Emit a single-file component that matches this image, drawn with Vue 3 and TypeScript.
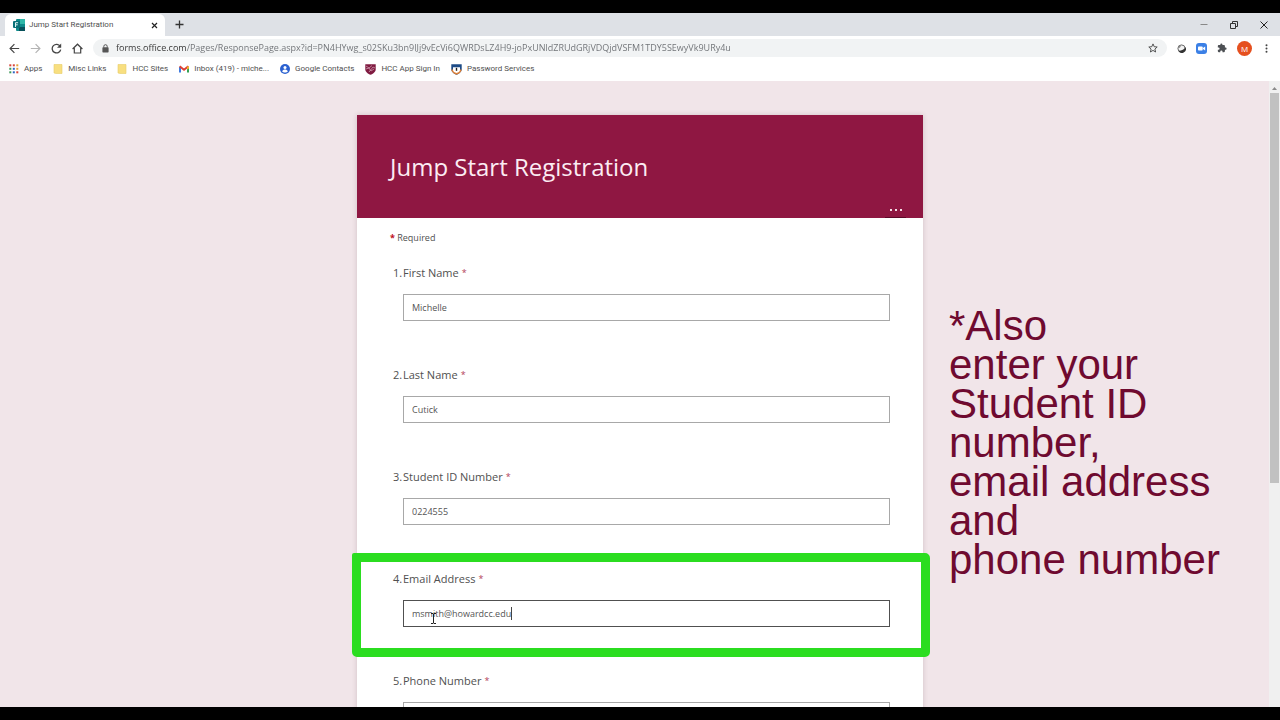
<script setup lang="ts">
import { ref } from 'vue'

interface Question {
  id: string
  label: string
  value: string
  active?: boolean
}

const url = ref('forms.office.com/Pages/ResponsePage.aspx?id=PN4HYwg_s02SKu3bn9lJj9vEcVi6QWRDsLZ4H9-joPxUNldZRUdGRjVDQjdVSFM1TDY5SEwyVk9URy4u')

const questions = ref<Question[]>([
  { id: 'first-name', label: 'First Name', value: 'Michelle' },
  { id: 'last-name', label: 'Last Name', value: 'Cutick' },
  { id: 'student-id', label: 'Student ID Number', value: '0224555' },
  { id: 'email', label: 'Email Address', value: 'msmith@howardcc.edu', active: true },
  { id: 'phone', label: 'Phone Number', value: '' },
])

const noteLines = ['*Also', 'enter your', 'Student ID', 'number,', 'email address', 'and', 'phone number']

const appDots = ['#d8453a', '#d8453a', '#e2a33a', '#3f9a5a', '#2f66c4', '#e2a33a', '#3f9a5a', '#2f66c4', '#d8453a']
</script>

<template>
  <div class="screen">
    <header class="browser">
      <div class="tabstrip">
        <div class="tab">
          <svg class="forms-icon" viewBox="0 0 12 12" aria-hidden="true">
            <rect x="3" y="0" width="9" height="12" rx="1" fill="#0e8a8a" />
            <rect x="7" y="0" width="5" height="5" fill="#2fb7a8" />
            <rect x="6" y="8" width="6" height="4" fill="#07505a" />
            <rect x="0" y="2" width="7" height="7" rx="1" fill="#0a7078" />
            <path d="M2.5 8V3.7h2.6M2.5 5.8h2.2" stroke="#d9f3f1" fill="none" />
          </svg>
          <span class="tab-title">Jump Start Registration</span>
          <button class="icon-btn" aria-label="Close tab">
            <svg width="7" height="7" viewBox="0 0 7 7"><path d="M1 1l5 5M6 1L1 6" stroke="#222" stroke-width="1.2" /></svg>
          </button>
        </div>
        <button class="icon-btn new-tab" aria-label="New tab">
          <svg width="9" height="9" viewBox="0 0 9 9"><path d="M4.5 .5v8M.5 4.5h8" stroke="#333" stroke-width="1.3" /></svg>
        </button>
        <div class="window-controls">
          <button class="icon-btn" aria-label="Minimize">
            <svg width="8" height="8" viewBox="0 0 8 8"><path d="M.5 3.5h7" stroke="#888" /></svg>
          </button>
          <button class="icon-btn" aria-label="Restore">
            <svg width="8" height="8" viewBox="0 0 8 8"><path d="M.5 2.500h5v5h-5zM2.500 2.500v-2h5v5h-2" fill="none" stroke="#333" /></svg>
          </button>
          <button class="icon-btn" aria-label="Close window">
            <svg width="8" height="8" viewBox="0 0 8 8"><path d="M.5 .5l7 7M7.500 .5l-7 7" stroke="#222" /></svg>
          </button>
        </div>
      </div>

      <nav class="toolbar">
        <button class="icon-btn" aria-label="Back">
          <svg width="11" height="11" viewBox="0 0 11 11"><path d="M10.200 5.500H1.200M5.400 1.200L1.100 5.500l4.300 4.300" fill="none" stroke="#454545" stroke-width="1.200" /></svg>
        </button>
        <button class="icon-btn" aria-label="Forward">
          <svg width="11" height="11" viewBox="0 0 11 11"><path d="M.8 5.500h9M5.600 1.200l4.300 4.300-4.300 4.300" fill="none" stroke="#b4b4b4" stroke-width="1.200" /></svg>
        </button>
        <button class="icon-btn" aria-label="Reload">
          <svg width="11" height="11" viewBox="0 0 11 11"><path d="M9.200 3.400A4.300 4.300 0 1 0 9.700 6.600" fill="none" stroke="#454545" stroke-width="1.300" /><path d="M10.200 .6v4.200H6z" fill="#454545" /></svg>
        </button>
        <button class="icon-btn" aria-label="Home">
          <svg width="11" height="11" viewBox="0 0 11 11"><path d="M.6 6L5.500 1.200 10.400 6M2.300 5v5h6.400V5" fill="none" stroke="#454545" stroke-width="1.200" /></svg>
        </button>
        <div class="omnibox">
          <svg width="7" height="9" viewBox="0 0 7 9" aria-hidden="true"><rect x=".4" y="3.200" width="6.200" height="5.300" rx=".7" fill="#555" /><path d="M1.800 3.600V2.400a1.700 1.700 0 0 1 3.400 0v1.200" fill="none" stroke="#555" /></svg>
          <input v-model="url" class="url" aria-label="Address" spellcheck="false" />
          <button class="icon-btn" aria-label="Bookmark this page">
            <svg width="10" height="10" viewBox="0 0 10 10"><path d="M5 .9l1.200 2.800 3 .3-2.300 2 .7 3L5 7.400 2.400 9l.7-3L.8 4l3-.3z" fill="none" stroke="#444" stroke-width=".9" /></svg>
          </button>
        </div>
        <button class="icon-btn" aria-label="Recorder extension">
          <svg width="9" height="9" viewBox="0 0 9 9"><circle cx="4.500" cy="4.500" r="3.600" fill="#f3f3f3" stroke="#6a6a6a" /><path d="M1.300 6.700A4 4 0 0 0 8.400 3C7.300 5.800 4.500 6.800 1.300 6.700z" fill="#333" /><path d="M1 4.500A3.500 3.500 0 0 1 4.500 1L3 3.500z" fill="#888" /></svg>
        </button>
        <button class="icon-btn" aria-label="Zoom extension">
          <svg width="11" height="11" viewBox="0 0 11 11"><rect width="11" height="11" rx="3" fill="#3b80e6" /><rect x="2" y="3.400" width="4.700" height="4.200" rx=".8" fill="#fff" /><path d="M7 5l2.200-1.500v4L7 6z" fill="#fff" /></svg>
        </button>
        <button class="icon-btn" aria-label="Extensions">
          <svg width="10" height="10" viewBox="0 0 24 24"><path d="M20.500 11H19V7c0-1.100-.9-2-2-2h-4V3.500a2.500 2.500 0 0 0-5 0V5H4c-1.100 0-2 .9-2 2v3.800h1.500a2.700 2.700 0 0 1 0 5.400H2V20c0 1.100.9 2 2 2h3.800v-1.500a2.700 2.700 0 0 1 5.400 0V22H17c1.100 0 2-.9 2-2v-4h1.500a2.500 2.500 0 0 0 0-5z" fill="#4d5054" /></svg>
        </button>
        <button class="avatar" aria-label="Profile">M</button>
        <button class="icon-btn" aria-label="Menu">
          <svg width="3" height="9" viewBox="0 0 3 9"><g fill="#444"><circle cx="1.500" cy="1.200" r="1" /><circle cx="1.500" cy="4.500" r="1" /><circle cx="1.500" cy="7.800" r="1" /></g></svg>
        </button>
      </nav>

      <nav class="bookmarks" aria-label="Bookmarks">
        <a href="#">
          <svg width="10" height="10" viewBox="0 0 10 10"><rect v-for="(c, i) in appDots" :key="i" :x="(i % 3) * 3.5 + 0.3" :y="Math.floor(i / 3) * 3.5 + 0.3" width="2" height="2" :fill="c" /></svg>
          Apps
        </a>
        <a href="#"><svg width="10" height="10" viewBox="0 0 10 10"><path d="M1 .5h8V9.500H3L1 9z" fill="#f8df80" stroke="#e8cd68" stroke-width=".6" /></svg>Misc Links</a>
        <a href="#"><svg width="10" height="10" viewBox="0 0 10 10"><path d="M1 .5h8V9.500H3L1 9z" fill="#f8df80" stroke="#e8cd68" stroke-width=".6" /></svg>HCC Sites</a>
        <a href="#">
          <svg width="10" height="10" viewBox="0 0 10 10"><path d="M1 8.500V3" stroke="#3f7be0" stroke-width="2" /><path d="M9 8.500V3" stroke="#35a255" stroke-width="2" /><path d="M.6 2.300L5 5.800l4.400-3.500" fill="none" stroke="#dc4034" stroke-width="2" /><path d="M8 2.500h2v2L8 5.500z" fill="#f2b52b" /></svg>
          Inbox (419) - miche...
        </a>
        <a href="#">
          <svg width="10" height="10" viewBox="0 0 10 10"><circle cx="5" cy="5" r="5" fill="#2b61d0" /><circle cx="5" cy="3.500" r="1.500" fill="#fff" /><path d="M2.200 7.500c.8-2.600 4.800-2.600 5.600 0-1.200 1.400-4.400 1.400-5.600 0z" fill="#fff" /></svg>
          Google Contacts
        </a>
        <a href="#">
          <svg width="11" height="11" viewBox="0 0 11 11"><path d="M.3.3h10.400v5.200c0 2.600-3 4.400-5.200 5.300C3.300 9.900.3 8.100.3 5.500z" fill="#7f1a40" /><path d="M1 2l3 2 3-2.500M1 5l3-1 2 3 3-2M4 8l4-5 2 1" fill="none" stroke="#d9aabb" stroke-width=".7" /></svg>
          HCC App Sign In
        </a>
        <a href="#">
          <svg width="11" height="11" viewBox="0 0 11 11"><path d="M.3.3h10.400v5.200c0 2.600-3 4.400-5.200 5.300C3.300 9.900.3 8.100.3 5.500z" fill="#1d4b86" /><path d="M.4 5.500h10.200c0 2.600-3 4.400-5.100 5.200C3.400 9.900.4 8.100.4 5.500z" fill="#e08238" /><path d="M2 3.200h7v2.800c0 1.500-2 2.500-3.500 3C4 8.500 2 7.500 2 6z" fill="#fff" /><path d="M5.500 3.800v3" stroke="#222" stroke-width="1.400" /></svg>
          Password Services
        </a>
      </nav>
    </header>

    <main class="page">
      <form class="card" @submit.prevent>
        <div class="banner">
          <h1>Jump Start Registration</h1>
          <button type="button" class="more" aria-label="More options">
            <svg width="12" height="2" viewBox="0 0 12 2"><path d="M0 0h2v2H0zM5 0h2v2H5zM10 0h2v2h-2z" fill="#f4dfe7" /></svg>
          </button>
        </div>
        <p class="required"><span class="required-star">*</span> Required</p>
        <div v-for="(q, i) in questions" :key="q.id" class="question" :class="{ active: q.active }">
          <label :for="q.id"><span class="number">{{ i + 1 }}.</span>{{ q.label }} <span class="star">*</span></label>
          <div class="field">
            <input :id="q.id" v-model="q.value" type="text" spellcheck="false" />
            <template v-if="q.active">
              <span class="caret"></span>
              <svg class="pointer" width="7" height="11" viewBox="0 0 7 11" aria-hidden="true"><path d="M1 .5h2l.5.5.5-.5h2M3.500 1v9M1 10.500h2l.5-.5.5.5h2" fill="none" stroke="#222" /></svg>
            </template>
          </div>
        </div>
      </form>
      <aside class="side">
        <p class="note"><span v-for="line in noteLines" :key="line">{{ line }}</span></p>
        <div class="scrollbar" aria-hidden="true">
          <svg width="5" height="3" viewBox="0 0 5 3"><path d="M0 3L2.500 0 5 3z" fill="#8a8a8a" /></svg>
          <div class="thumb"></div>
          <svg width="5" height="3" viewBox="0 0 5 3"><path d="M0 0h5L2.500 3z" fill="#444" /></svg>
        </div>
      </aside>
    </main>
  </div>
</template>

<style>
html,
body {
  background: #000;
}
</style>

<style scoped>
*,
*::after {
  box-sizing: border-box;
}

.screen {
  display: flex;
  flex-direction: column;
  height: 100vh;
  padding: 13px 0;
  overflow: hidden;
  background: #000;
  color: #505050;
  font-family: "Open Sans", "Noto Sans", sans-serif;
}

svg {
  display: block;
  flex: none;
}

button,
input {
  margin: 0;
  padding: 0;
  border: 0;
  background: none;
  font-family: inherit;
}

.icon-btn {
  display: flex;
  flex: none;
  align-items: center;
  justify-content: center;
}

.browser {
  flex: none;
  background: #fff;
}

.tabstrip {
  display: flex;
  align-items: center;
  height: 23px;
  padding-left: 5px;
  background: #dee1e6;
}

.tab {
  display: flex;
  align-items: center;
  align-self: flex-end;
  width: 160px;
  height: 22px;
  padding: 0 7px 0 8px;
  border-radius: 6px 6px 0 0;
  background: #fff;
}

.forms-icon {
  width: 12px;
  height: 12px;
}

.tab-title {
  flex: 1;
  margin-left: 4px;
  font-family: Roboto, "Open Sans", sans-serif;
  font-size: 8px;
  line-height: 12px;
  white-space: nowrap;
}

.new-tab {
  margin-left: 10px;
}

.window-controls {
  display: flex;
  gap: 22px;
  margin-left: auto;
  padding-right: 12px;
}

.toolbar {
  display: flex;
  align-items: center;
  gap: 10px;
  height: 24px;
  padding: 0 12px 0 9px;
}

.omnibox {
  display: flex;
  flex: 1;
  align-items: center;
  gap: 7px;
  height: 18px;
  padding: 0 9px;
  border-radius: 9px;
  background: #f1f3f4;
}

.url {
  flex: 1;
  min-width: 0;
  height: 18px;
  background: linear-gradient(to right, #333 71px, #6d7074 71px);
  background-clip: text;
  -webkit-background-clip: text;
  -webkit-text-fill-color: transparent;
  color: #6d7074;
  font-size: 9px;
  line-height: 18px;
}

.avatar {
  width: 15px;
  height: 15px;
  margin-right: 3px;
  border-radius: 50%;
  background: #e5501f;
  color: #fff;
  font-size: 8px;
  line-height: 15px;
}

.bookmarks {
  display: flex;
  align-items: center;
  gap: 11px;
  height: 21px;
  padding: 0 9px 3px;
}

.bookmarks a {
  display: flex;
  align-items: center;
  gap: 5px;
  color: #505050;
  font-family: Roboto, "Open Sans", sans-serif;
  font-size: 8px;
  line-height: 12px;
  text-decoration: none;
  white-space: nowrap;
}

.page {
  display: grid;
  flex: 1;
  grid-template-columns: 1fr minmax(0, 566px) 1fr;
  min-height: 0;
  overflow: hidden;
  background: #f1e5e9;
}

.card {
  grid-column: 2;
  align-self: start;
  margin-top: 34px;
  padding-bottom: 40px;
  background: #fff;
  box-shadow: 0 0 5px rgba(80, 40, 55, 0.2);
}

.banner {
  display: flex;
  align-items: center;
  justify-content: space-between;
  height: 103px;
  padding: 0 17px 0 33px;
  background: #8f1742;
}

h1 {
  margin: 0;
  color: #fcecf3;
  font-size: 24px;
  font-weight: 400;
  line-height: 34px;
}

.more {
  display: flex;
  align-items: center;
  align-self: flex-end;
  justify-content: center;
  width: 21px;
  height: 15px;
  border-bottom: 1px solid #5d0828;
}

.required {
  margin: 0;
  padding: 12px 33px 0;
  font-size: 9px;
  line-height: 16px;
}

.required-star {
  color: #c00d1e;
  font-weight: 700;
}

.star {
  color: #b3405a;
  font-size: 9px;
}

.question {
  position: relative;
  height: 102px;
  padding: 19px 33px 0 36px;
}

.question label {
  display: flex;
  gap: 3px;
  font-size: 11px;
  line-height: 16px;
}

.number {
  width: 8px;
  margin-right: -1px;
  white-space: nowrap;
}

.field {
  position: relative;
  margin: 13px 0 0 10px;
}

.field input {
  display: block;
  width: 100%;
  height: 27px;
  padding: 0 8px;
  border: 1px solid #a8a8a8;
  color: #555;
  font-size: 9px;
}

.active .field input {
  border-color: #505050;
}

.active::after {
  position: absolute;
  top: 1px;
  right: -7px;
  left: -5px;
  height: 104px;
  border: 9px solid #2bdd20;
  border-radius: 2px 5px 5px 5px;
  content: "";
  pointer-events: none;
}

.caret {
  position: absolute;
  top: 7px;
  left: 108px;
  width: 1px;
  height: 13px;
  background: #444;
}

.pointer {
  position: absolute;
  top: 13px;
  left: 27px;
}

.side {
  display: flex;
  justify-content: space-between;
  min-height: 0;
}

.note {
  margin: 225px 0 0 26px;
  color: #6f0a30;
  font-family: "Liberation Sans", Arial, sans-serif;
  font-size: 42px;
  line-height: 39px;
  white-space: nowrap;
}

.note span {
  display: block;
}

.scrollbar {
  display: flex;
  flex-direction: column;
  align-items: center;
  width: 11px;
  padding: 6px 0 5px;
  background: #f0f0f0;
}

.thumb {
  flex: none;
  width: 9px;
  height: 390px;
  margin: 3px 0 auto;
  background: #c1c1c1;
}
</style>
